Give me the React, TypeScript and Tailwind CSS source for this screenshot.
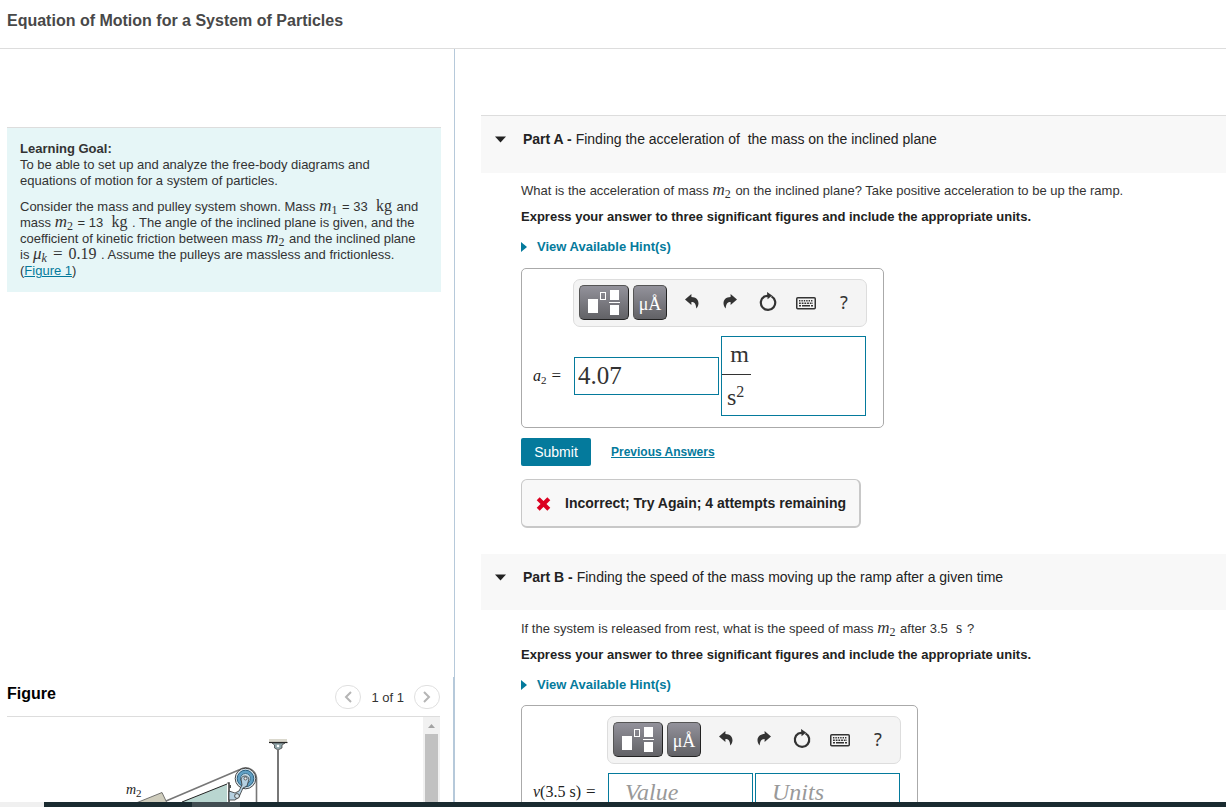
import type { ReactNode } from 'react';
import { clsx } from 'clsx';

function Sym({ children, sub }: { children: ReactNode; sub?: ReactNode }) {
  return (
    <span className="mr-px font-['Liberation_Serif',serif] text-[17px] leading-[0]">
      <i>{children}</i>
      {sub && <sub className="text-[12px] leading-[0]">{sub}</sub>}
    </span>
  );
}

function Roman({ children }: { children: ReactNode }) {
  return <span className="mx-px font-['Liberation_Serif',serif] text-[16px] leading-[0]">{children}</span>;
}

function Equals() {
  return <span className="mx-[5px] font-['Liberation_Serif',serif] text-[17px] leading-[0]">=</span>;
}

const TOOLS: { label: string; icon: ReactNode }[] = [
  {
    label: 'Undo',
    icon: (
      <svg width="14" height="16" viewBox="0 0 14 16" fill="#333">
        <path d="M6.4 0 L0 5.5 L6.4 11 V8 C9.4 8 10.8 9.5 11.3 14.4 C15.6 9.8 13.4 3 6.4 3 Z" />
      </svg>
    ),
  },
  {
    label: 'Redo',
    icon: (
      <svg width="14" height="16" viewBox="0 0 14 16" fill="#333">
        <path d="M7.6 0 L14 5.5 L7.6 11 V8 C4.6 8 3.2 9.5 2.7 14.4 C-1.6 9.8 0.6 3 7.6 3 Z" />
      </svg>
    ),
  },
  {
    label: 'Reset',
    icon: (
      <svg width="18" height="20" viewBox="0 0 18 20" fill="none">
        <path d="M12.5 4.4 A7.2 7.2 0 1 1 5.4 4.5 L9.5 3.6" stroke="#333" strokeWidth="2.2" />
        <path d="M8 0 L13.2 3.5 L8.6 7.2 Z" fill="#333" />
      </svg>
    ),
  },
  {
    label: 'Keyboard shortcuts',
    icon: (
      <svg width="20" height="20" viewBox="0 0 20 20" fill="none" stroke="#333">
        <rect x="0.75" y="5.75" width="18.5" height="11" rx="1" strokeWidth="1.5" />
        <path d="M3 8.7 H17" strokeWidth="1.4" strokeDasharray="1.4 1" />
        <path d="M3 11.2 H17" strokeWidth="1.4" strokeDasharray="1.8 0.9" />
        <path d="M3 13.8 H5 M6 13.8 H14 M15 13.8 H17" strokeWidth="1.4" />
      </svg>
    ),
  },
  {
    label: 'Help',
    icon: <span className="font-['Noto_Sans',sans-serif] text-[18px] leading-none text-[#333]">?</span>,
  },
];

const padButton =
  'flex h-[35px] items-center justify-center rounded-[5px] border border-[#555] border-r-[#222] border-b-[#222] bg-linear-to-b from-[#93929b] to-[#626266]';

function Toolbar() {
  return (
    <div className="flex h-12 w-[294px] items-start rounded-[7px] border border-[#ddd] bg-[#f4f4f4] p-[5px]">
      <button type="button" aria-label="Templates" className={clsx(padButton, 'w-[50px] shrink-0')}>
        <svg width="32" height="26" viewBox="0 0 32 26" fill="#fff">
          <rect x="0" y="9" width="10" height="14" />
          <rect x="12.5" y="2.5" width="5" height="7" fill="none" stroke="#fff" />
          <rect x="22" y="0" width="9" height="10" />
          <rect x="21" y="12" width="11" height="1" />
          <rect x="22" y="15" width="9" height="10" />
        </svg>
      </button>
      <button
        type="button"
        aria-label="Symbols"
        className={clsx(padButton, "ml-1 w-[34px] shrink-0 pt-1 font-['Liberation_Serif',serif] text-[18px] text-white")}
      >
        μÅ
      </button>
      <div className="ml-[6px] flex h-[34px]">
        {TOOLS.map((tool) => (
          <button
            key={tool.label}
            type="button"
            aria-label={tool.label}
            className="flex w-[38px] shrink-0 items-center justify-center"
          >
            {tool.icon}
          </button>
        ))}
      </div>
    </div>
  );
}

const fieldClass =
  "w-[145px] border border-[#047a9c] bg-white font-['Liberation_Serif',serif] text-[#333] outline-none placeholder:italic placeholder:text-[#999]";

function AnswerBox({ label, labelWidth, children }: { label: ReactNode; labelWidth: string; children: ReactNode }) {
  return (
    <div className="flex w-fit flex-col items-end rounded-[5px] border border-[#aaa] pt-[10px] pr-4 pb-[11px] pl-[11px]">
      <Toolbar />
      <div className="mt-[9px] mr-px flex items-center">
        <span className={clsx("shrink-0 font-['Liberation_Serif',serif] text-[16px] whitespace-nowrap text-[#222]", labelWidth)}>
          {label}
        </span>
        <div className="flex items-center gap-[2px]">{children}</div>
      </div>
    </div>
  );
}

function PartHeader({ part, title, first }: { part: string; title: string; first?: boolean }) {
  return (
    <header className={clsx('bg-[#f8f8f8] pt-[13px]', first ? 'h-[58px] border-t border-[#ddd]' : 'h-14')}>
      <button type="button" aria-expanded="true" className="flex items-center pl-[14px] text-[14px] leading-5 text-[#222]">
        <svg width="11" height="7" viewBox="0 0 11 7" fill="#222">
          <path d="M0 0.5 H11 L5.5 6.5 Z" />
        </svg>
        <h2 className="ml-[17px] whitespace-pre">
          <b>{part} - </b>
          {title}
        </h2>
      </button>
    </header>
  );
}

function Prompt({ children }: { children: ReactNode }) {
  return (
    <>
      <p className="leading-4">{children}</p>
      <p className="mt-[10px] leading-4 font-bold text-[#222]">
        Express your answer to three significant figures and include the appropriate units.
      </p>
      <button type="button" className="mt-[14px] flex items-center leading-4 font-bold text-[#047a9c]">
        <svg width="6" height="10" viewBox="0 0 6 10" fill="#047a9c">
          <path d="M0 0 L6 5 L0 10 Z" />
        </svg>
        <span className="ml-[10px]">View Available Hint(s)</span>
      </button>
    </>
  );
}

function PulleyDrawing() {
  return (
    <svg width="416" height="85" viewBox="7 717 416 85" className="shrink-0">
      <text x="126" y="794" fontSize="14" fontStyle="italic" fontFamily="Liberation Serif, serif" fill="#222">
        m
      </text>
      <text x="136" y="797" fontSize="11" fontFamily="Liberation Serif, serif" fill="#222">
        2
      </text>
      {/* block on the ramp */}
      <path d="M136 803 L162 792.5 L167 803 Z" fill="#cfcdbd" stroke="#555" strokeWidth="0.8" />
      {/* incline */}
      <path d="M182 802 L227 784 V802 Z" fill="#b9d6d0" />
      <path d="M182 802 L227 784" stroke="#222" />
      <path d="M227.5 783 H229 V802" stroke="#444" strokeWidth="1.6" fill="none" />
      {/* rope */}
      <path d="M166 801 L240 769.5 C248 765 257 771 256.5 780 V802" fill="none" stroke="#777" strokeWidth="1.6" />
      {/* pulley and bracket */}
      <circle cx="245.5" cy="778.5" r="10.3" fill="#dbe8ef" stroke="#444" />
      <circle cx="245.5" cy="778.5" r="8.3" fill="#5f9fc4" stroke="#285d7d" />
      <circle cx="245.5" cy="778.5" r="5" fill="#c8deea" stroke="#40718c" />
      <path
        d="M229 791 L235 793 L239 791 L242 785 L241 779 C242 775 248 775 249 779 L247 786 L243 788 L239 797 L235 800 H229 Z"
        fill="#b5d0e1"
        stroke="#333"
        strokeWidth="0.8"
      />
      <circle cx="245.5" cy="778.5" r="1.5" fill="#eee" stroke="#444" strokeWidth="0.8" />
      <circle cx="237" cy="796" r="2.4" fill="#d5e3eb" stroke="#333" strokeWidth="0.8" />
      <path d="M229 785 H231 V788 H229" fill="#555" />
      {/* ceiling mount */}
      <rect x="269" y="739" width="18" height="3" fill="#dad8cd" />
      <path d="M269 742.5 H287.5" stroke="#222" strokeWidth="1.2" />
      <path d="M272 743 H285 L282 745 V748 L278 750 L274.5 748 V745 Z" fill="#8fa4a8" stroke="#333" strokeWidth="0.7" />
      <circle cx="278" cy="746" r="1.3" fill="#fff" />
      <path d="M278 749 V802" stroke="#777" strokeWidth="2" />
    </svg>
  );
}

const navButton = 'flex h-6 w-[26px] items-center justify-center rounded-full border border-[#e0e0e0]';

function Sidebar() {
  return (
    <aside className="flex w-[455px] shrink-0 flex-col border-r border-[#b6c9da]">
      <section className="mt-[78px] mr-[13px] ml-[7px] border-t border-[#ddd] bg-[#e6f6f7] p-[13px] text-[13px] leading-4">
        <h2 className="font-bold">Learning Goal:</h2>
        <p>
          To be able to set up and analyze the free-body diagrams and
          <br />
          equations of motion for a system of particles.
        </p>
        <p className="mt-[10px] whitespace-nowrap">
          Consider the mass and pulley system shown. Mass <Sym sub="1">m</Sym> = 33&nbsp; <Roman>kg</Roman> and
          <br />
          mass <Sym sub="2">m</Sym> = 13&nbsp; <Roman>kg</Roman> . The angle of the inclined plane is given, and the
          <br />
          coefficient of kinetic friction between mass <Sym sub="2">m</Sym> and the inclined plane
          <br />
          is <Sym sub={<i>k</i>}>μ</Sym>
          <Equals />
          <Roman>0.19</Roman> . Assume the pulleys are massless and frictionless.
          <br />(
          <a href="#figure" className="text-[#047a9c] underline">
            Figure 1
          </a>
          )
        </p>
      </section>

      <section id="figure" className="mt-auto border-r border-[#b6c9da] pr-[13px] pl-[7px]">
        <div className="flex h-10 items-center border-b border-[#ddd]">
          <h2 className="mb-[6px] text-[16px] font-bold text-black">Figure</h2>
          <div className="ml-auto flex items-center text-[13px]">
            <button type="button" aria-label="Previous figure" className={navButton}>
              <svg width="8" height="12" viewBox="0 0 8 12" fill="none" stroke="#b5b5b5" strokeWidth="2">
                <path d="M7 1 L2 6 L7 11" />
              </svg>
            </button>
            <span className="mx-[10px] mt-[2px]">1 of 1</span>
            <button type="button" aria-label="Next figure" className={navButton}>
              <svg width="8" height="12" viewBox="0 0 8 12" fill="none" stroke="#b5b5b5" strokeWidth="2">
                <path d="M1 1 L6 6 L1 11" />
              </svg>
            </button>
          </div>
        </div>
        <div className="flex h-[85px] justify-between overflow-hidden">
          <PulleyDrawing />
          <div className="flex w-[17px] shrink-0 flex-col items-center bg-[#f1f1f1]">
            <svg width="17" height="17" viewBox="0 0 17 17" fill="#a3a3a3" className="shrink-0">
              <path d="M5 11 L8.5 7 L12 11 Z" />
            </svg>
            <div className="w-[13px] flex-1 bg-[#c1c1c1]" />
          </div>
        </div>
      </section>
    </aside>
  );
}

export default function App() {
  return (
    <div className="flex h-screen flex-col overflow-hidden bg-white font-['Liberation_Sans',Arial,sans-serif] text-[13px] text-[#333]">
      <header className="h-[49px] shrink-0 border-b border-[#ddd] pt-[9px] pl-[7px]">
        <h1 className="text-[16px] leading-6 font-bold text-[#484848]">Equation of Motion for a System of Particles</h1>
      </header>

      <div className="flex min-h-0 flex-1">
        <Sidebar />
        <main className="min-w-0 flex-1 overflow-hidden pt-[66px] pl-[26px]">
          <section>
            <PartHeader first part="Part A" title="Finding the acceleration of  the mass on the inclined plane" />
            <div className="pt-[10px] pl-10">
              <Prompt>
                What is the acceleration of mass <Sym sub="2">m</Sym> on the inclined plane? Take positive acceleration to be up
                the ramp.
              </Prompt>
              <div className="mt-[13px]">
                <AnswerBox
                  labelWidth="w-[41px]"
                  label={
                    <>
                      <i>a</i>
                      <sub className="text-[11px]">2</sub>
                      <Equals />
                    </>
                  }
                >
                  <input aria-label="Value" defaultValue="4.07" className={clsx(fieldClass, 'h-[38px] px-[3px] text-[25px]')} />
                  <div role="textbox" aria-label="Units" tabIndex={0} className={clsx(fieldClass, 'h-20 text-[24px]')}>
                    <div className="flex w-[29px] flex-col">
                      <span className="flex h-[38px] items-center justify-center border-b border-[#333] pb-1 pl-[6px]">m</span>
                      <span className="pt-[4px] pl-[5px] leading-9">
                        s<sup className="text-[16px] leading-none">2</sup>
                      </span>
                    </div>
                  </div>
                </AnswerBox>
              </div>
              <div className="mt-[10px] flex items-center">
                <button type="button" className="h-7 w-[70px] rounded-[2px] bg-[#047a9c] text-[14px] text-white">
                  Submit
                </button>
                <a href="#previous" className="ml-5 text-[12px] font-bold text-[#047a9c] underline">
                  Previous Answers
                </a>
              </div>
              <div
                role="status"
                className="mt-[13px] flex h-[49px] w-fit items-center rounded-[6px] border border-r-2 border-b-2 border-[#c8c8c8] bg-[#f8f8f8] pt-px pr-[13px] pl-[14px] text-[14px] font-bold text-[#222]"
              >
                <svg width="15" height="14" viewBox="0 0 15 14" stroke="#db0020" strokeWidth="4.2">
                  <path d="M2.2 1.8 L12.8 12.2 M12.8 1.8 L2.2 12.2" />
                </svg>
                <span className="ml-[14px]">Incorrect; Try Again; 4 attempts remaining</span>
              </div>
            </div>
          </section>

          <section className="mt-[26px]">
            <PartHeader part="Part B" title="Finding the speed of the mass moving up the ramp after a given time" />
            <div className="pt-[11px] pl-10">
              <Prompt>
                If the system is released from rest, what is the speed of mass <Sym sub="2">m</Sym> after 3.5&nbsp; <Roman>s</Roman> ?
              </Prompt>
              <div className="mt-[12px]">
                <AnswerBox
                  labelWidth="w-[75px]"
                  label={
                    <>
                      <i>v</i>(3.5 s)
                      <Equals />
                    </>
                  }
                >
                  <input aria-label="Value" placeholder="Value" className={clsx(fieldClass, 'h-[38px] px-4 text-[24px]')} />
                  <input aria-label="Units" placeholder="Units" className={clsx(fieldClass, 'h-[38px] px-4 text-[24px]')} />
                </AnswerBox>
              </div>
            </div>
          </section>
        </main>
      </div>

      <footer className="flex h-[5px] shrink-0 bg-[#1a2b30]">
        <div className="w-11 bg-[#f0f0f0]" />
        <div className="ml-[148px] w-12 bg-[#414d51]" />
      </footer>
    </div>
  );
}
